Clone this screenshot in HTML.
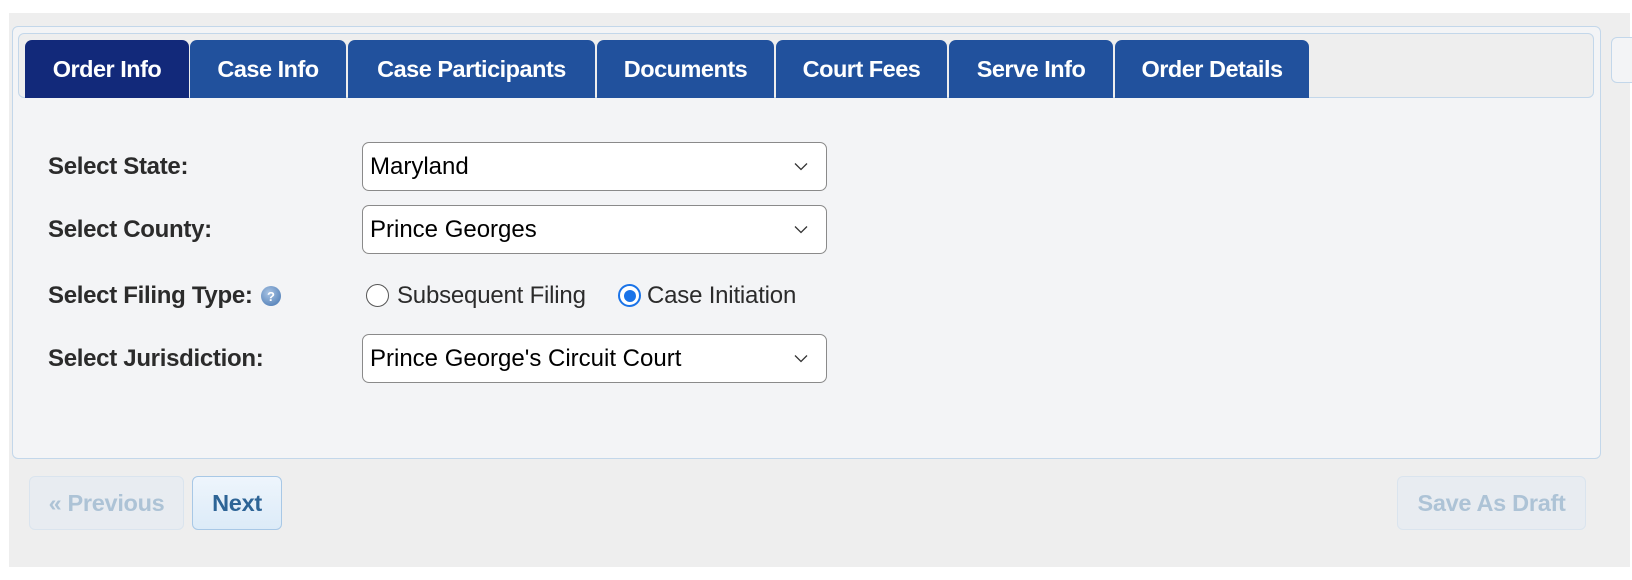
<!DOCTYPE html>
<html><head><meta charset="utf-8"><style>
*{box-sizing:border-box;margin:0;padding:0}
body{width:1632px;height:580px;background:#fff;font-family:"Liberation Sans",Arial,sans-serif;position:relative;overflow:hidden}
.bg{position:absolute;left:9px;top:13px;width:1621px;height:554px;background:#eeeeee}
.panel{position:absolute;left:12px;top:26px;width:1589px;height:433px;background:#f3f4f6;border:1px solid #c3d7ea;border-radius:6px}
.bar{position:absolute;left:18px;top:33px;width:1576px;height:65px;background:#eeeeee;border:1px solid #c3d7ea;border-radius:6px;overflow:hidden}
.tab{position:absolute;top:40px;height:58px;background:#21519d;color:#fff;font-weight:bold;font-size:23.5px;display:flex;align-items:center;justify-content:center;border-radius:7px 7px 0 0;letter-spacing:-0.5px;white-space:nowrap}
.tab.act{background:#12297a}
.side{position:absolute;left:1611px;top:37px;width:30px;height:46px;border:1px solid #c3d7ea;border-radius:6px;background:#f3f4f6}
.lbl{position:absolute;left:48px;font-weight:bold;font-size:24px;color:#2b2b2b;letter-spacing:-0.3px}
.sel{position:absolute;left:362px;width:465px;height:49px;background:#fff;border:1px solid #8a8a8a;border-radius:7px;font-size:24px;color:#000;padding-left:7px;display:flex;align-items:center}
.sel svg{position:absolute right:18px;top:19px}
.sel svg{position:absolute;right:18px;top:19px}
.radio{position:absolute;top:284px;width:23px;height:23px;border:1.5px solid #555;border-radius:50%;background:#fff}
.radio.on{border:2px solid #1a73e8}
.radio.on::after{content:"";position:absolute;left:3.5px;top:3.5px;width:12px;height:12px;border-radius:50%;background:#1a73e8}
.rt{position:absolute;top:282px;font-size:24px;color:#2b2b2b;letter-spacing:-0.2px}
.btn{position:absolute;top:476px;height:54px;border-radius:6px;font-weight:bold;font-size:23.5px;display:flex;align-items:center;justify-content:center;letter-spacing:-0.3px}
.dis{background:#e8ecf1;border:1px solid #dae4ee;color:#adc3d6}
.nx{background:linear-gradient(#eef5fc,#dcebf8);border:1px solid #a8c8e6;color:#2d6496}
</style></head><body>
<div class="bg"></div>
<div class="panel"></div>
<div class="bar"></div>
<div class="side"></div>
<div class="tab act" style="left:25px;width:164px">Order Info</div>
<div class="tab" style="left:190px;width:156px">Case Info</div>
<div class="tab" style="left:348px;width:247px">Case Participants</div>
<div class="tab" style="left:597px;width:177px">Documents</div>
<div class="tab" style="left:776px;width:171px">Court Fees</div>
<div class="tab" style="left:949px;width:164px">Serve Info</div>
<div class="tab" style="left:1115px;width:194px">Order Details</div>

<div class="lbl" style="top:153px">Select State:</div>
<div class="lbl" style="top:216px">Select County:</div>
<div class="lbl" style="top:282px">Select Filing Type:</div>
<div class="lbl" style="top:345px">Select Jurisdiction:</div>

<div class="sel" style="top:142px">Maryland<svg width="14" height="9" viewBox="0 0 14 9"><path d="M1 1.5L7 7.5L13 1.5" fill="none" stroke="#333" stroke-width="1.3"/></svg></div>
<div class="sel" style="top:205px">Prince Georges<svg width="14" height="9" viewBox="0 0 14 9"><path d="M1 1.5L7 7.5L13 1.5" fill="none" stroke="#333" stroke-width="1.3"/></svg></div>
<div class="sel" style="top:334px">Prince George's Circuit Court<svg width="14" height="9" viewBox="0 0 14 9"><path d="M1 1.5L7 7.5L13 1.5" fill="none" stroke="#333" stroke-width="1.3"/></svg></div>

<svg style="position:absolute;left:260px;top:285px" width="22" height="22" viewBox="0 0 22 22"><defs><radialGradient id="g" cx="40%" cy="35%" r="65%"><stop offset="0" stop-color="#a9c4e4"/><stop offset="1" stop-color="#5d88bd"/></radialGradient></defs><circle cx="11" cy="11" r="10" fill="url(#g)"/><text x="11" y="16" font-size="13" font-weight="bold" fill="#fff" text-anchor="middle" font-family="Liberation Sans">?</text></svg>

<div class="radio" style="left:366px"></div>
<div class="rt" style="left:397px">Subsequent Filing</div>
<div class="radio on" style="left:618px"></div>
<div class="rt" style="left:647px">Case Initiation</div>

<div class="btn dis" style="left:29px;width:155px">« Previous</div>
<div class="btn nx" style="left:192px;width:90px">Next</div>
<div class="btn dis" style="left:1397px;width:189px">Save As Draft</div>
</body></html>
